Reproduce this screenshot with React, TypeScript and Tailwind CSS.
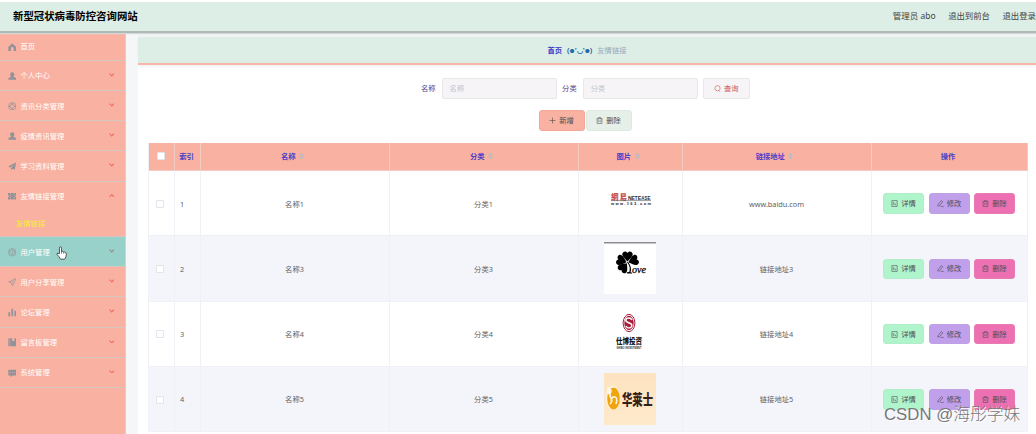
import type { ReactNode } from 'react'

type IconProps = { className?: string }

function Glyph({ className = '', children }: { className?: string; children: ReactNode }) {
  return (
    <svg viewBox="0 0 24 24" className={`shrink-0 ${className}`} fill="none" stroke="currentColor" strokeWidth="2">
      {children}
    </svg>
  )
}

const solid = { fill: 'currentColor', stroke: 'none' }

const glyphs: Record<string, ReactNode> = {
  home: <path {...solid} d="M12 1.500 1 11v11.500h7V15a4 4 0 0 1 8 0v7.500h7V11z" />,
  user: <path {...solid} d="M12 1a6 6 0 0 1 4 10.500V14l4 1.500q3 1 3 4V22H1v-2.500q0-3 3-4L8 14v-2.500A6 6 0 0 1 12 1z" />,
  help: (
    <>
      <circle cx="12" cy="12" r="10.500" />
      <circle cx="12" cy="12" r="5.500" />
      <path strokeWidth="3" d="M12 2v4M12 18v4M2 12h4M18 12h4" />
    </>
  ),
  promotion: <path {...solid} d="M23 1 1 12l5 3.500L17 7 9 17v6l4-4 6 3z" />,
  ticket: <path {...solid} d="M0 3h6v2h2V3h8v2h2V3h6v6a3 3 0 0 0 0 6v6h-6v-2h-2v2H8v-2H6v2H0v-6a3 3 0 0 0 0-6zM6 8v3h2V8zm0 6v3h2v-3zm10-6v3h2V8zm0 6v3h2v-3z" />,
  gauge: (
    <>
      <circle cx="12" cy="12" r="10.500" />
      <path d="M6 16a7 7 0 1 1 12 0M12 17l2-8M9 18h6" />
    </>
  ),
  position: <path d="M22 2 2 11l8 3 3 8z M10 14l5-5" />,
  bars: <path {...solid} d="M1 12h5v11H1zM9.500 2h5v21h-5zM18 8h5v15h-5z" />,
  notebook: <path {...solid} d="M1 1h4v22H1zM6 1h6v9l3-2.500 3 2.500V1h5v22H6z" />,
  chat: <path {...solid} d="M1 2h22v16H13l-5 5v-5H1zM6 9v2.500h2.500V9zm5 0v2.500h2.500V9zm5 0v2.500h2.500V9z" />,
}

const menu = [
  { icon: 'home', label: '首页' },
  { icon: 'user', label: '个人中心' },
  { icon: 'help', label: '资讯分类管理' },
  { icon: 'user', label: '疫情资讯管理' },
  { icon: 'promotion', label: '学习资料管理' },
  { icon: 'ticket', label: '友情链接管理', open: true },
  { icon: 'gauge', label: '用户管理', hover: true },
  { icon: 'position', label: '用户分享管理' },
  { icon: 'bars', label: '论坛管理' },
  { icon: 'notebook', label: '留言板管理' },
  { icon: 'chat', label: '系统管理' },
]

function Trash({ className }: IconProps) {
  return (
    <Glyph className={className}>
      <path d="M2 6h20M8 6V2h8v4M4 6v16h16V6M9.500 11v6M14.500 11v6" />
    </Glyph>
  )
}

function Detail({ className }: IconProps) {
  return (
    <Glyph className={className}>
      <path d="M3 2h18v20H3zM8 7v10M12 16h5M12 11l4 3" />
    </Glyph>
  )
}

function Edit({ className }: IconProps) {
  return (
    <Glyph className={className}>
      <path d="M15 2l5 4L9 19l-6 2 1-6zM12 22h11" />
    </Glyph>
  )
}

function Sort() {
  return (
    <svg viewBox="0 0 6 8" className="ml-[3.500px] h-[6.500px] w-[5px] shrink-0" fill="#b4bdc6">
      <path d="M3 0 6 3.500H0zM3 8 0 4.500h6z" />
    </svg>
  )
}

function Hand() {
  return (
    <svg viewBox="0 0 16 20" className="absolute top-[9px] left-[56px] h-[14px] w-[11px]">
      <path
        d="M5 11V3q0-2 1.500-2T8 3v5q2-1 3 .5 2-.5 2.500 1 1.800 0 1.500 2.500 0 4-2.500 7H6.500Q4.500 15 1.500 12q-.5-2 1.500-1.500z"
        fill="#fff"
        stroke="#333"
        strokeWidth="1.200"
      />
      <path d="M8 8v3M11 9v2" stroke="#333" strokeWidth=".8" />
    </svg>
  )
}

function Sidebar() {
  return (
    <aside className="w-[125.500px] shrink-0 border-r border-[#d9cfcf] bg-[#f9b1a1] text-white">
      {menu.map((item, i) => (
        <div key={item.label}>
          <div
            className={`relative flex items-center border-b pt-[1px] pl-[7.500px] ${i === 0 ? 'h-[28px]' : 'h-[30.150px]'} ${
              item.open ? 'border-transparent' : 'border-[#d8c5c0]'
            } ${item.hover ? 'bg-[#98d1c9]' : ''}`}
          >
            <Glyph className="h-[8.500px] w-[8.500px] text-[#909399]">{glyphs[item.icon]}</Glyph>
            <span className="ml-[4.500px]">{item.label}</span>
            {i > 0 && (
              <svg
                viewBox="0 0 10 6"
                className={`absolute top-[12px] right-[10.500px] h-[3.500px] w-[5.500px] ${item.hover ? 'text-[#a08a84]' : 'text-[#f4696b]'}`}
                fill="none"
                stroke="currentColor"
                strokeWidth="2"
              >
                <path d={item.open ? 'M1 5l4-4 4 4' : 'M1 1l4 4 4-4'} />
              </svg>
            )}
            {item.hover && <Hand />}
          </div>
          {item.open && (
            <div className="flex h-[25.500px] items-center border-b border-[#d8c5c0] pl-[16px] text-[#f5ee32]">友情链接</div>
          )}
        </div>
      ))}
    </aside>
  )
}

function NetEase() {
  return (
    <svg viewBox="0 0 52 52" className="h-[52px] w-[52px]">
      <text x="7" y="22.500" fontSize="7.500" fontWeight="900" fill="#c8504c" textLength="16" fontFamily="Noto Sans CJK TC">網易</text>
      <text x="24" y="22.500" fontSize="5.800" fontWeight="bold" fill="#1c2c3c" textLength="22.500" lengthAdjust="spacingAndGlyphs" fontFamily="Liberation Sans">
        N<tspan fontSize="4.900">ET</tspan>E<tspan fontSize="4.900">ASE</tspan>
      </text>
      <path d="M7 23.600h40" stroke="#555" strokeWidth=".6" />
      <text x="7" y="27.500" fontSize="4" fontWeight="bold" fill="#222" textLength="40" lengthAdjust="spacing" fontFamily="Liberation Sans">www.163.com</text>
    </svg>
  )
}

function Clover() {
  const heart = 'M0-1C-1.500-3-5-6-4.800-8.500-4.500-11.500-1-12 0-9.500 1-12 4.500-11.500 4.800-8.500 5-6 1.500-3 0-1z'
  return (
    <svg viewBox="0 0 52 52" className="h-[52px] w-[52px] bg-white">
      <path d="M0 .7h52" stroke="#8d8d8f" strokeWidth="1.500" />
      {[-142, -72, 0, 72].map((a) => (
        <path key={a} d={heart} transform={`translate(23.500 20.500) rotate(${a}) scale(1.080 1)`} />
      ))}
      <path d="M23.500 20q4 5 2.500 10l-3 1h5" fill="none" stroke="#000" strokeWidth="1.200" />
      <text x="28" y="30.800" fontSize="9.500" fontStyle="italic" textLength="14" lengthAdjust="spacingAndGlyphs" stroke="#000" strokeWidth=".25" fontFamily="Liberation Serif">ove</text>
    </svg>
  )
}

function Shibo() {
  return (
    <svg viewBox="0 0 52 52" className="h-[52px] w-[52px]">
      <ellipse cx="25" cy="15" rx="5.900" ry="8.600" fill="#fff" stroke="#a61e3b" strokeWidth="1" />
      <ellipse cx="25" cy="15" rx="4.700" ry="7.200" fill="#a61e3b" />
      <path d="M28 12q-1-2-3-2c-4 0-4 3.500-1 4.500l2 .8c3 1.200 2 4.700-1 4.700q-2 0-3-2" fill="none" stroke="#fff" strokeWidth="1.500" />
      <text x="12" y="35.500" fontSize="8.300" fontWeight="900" fill="#181818" textLength="26" lengthAdjust="spacingAndGlyphs" fontFamily="Noto Sans CJK SC">仕博投资</text>
      <text x="12.500" y="40.500" fontSize="2.800" fontWeight="bold" fill="#333" textLength="25" lengthAdjust="spacingAndGlyphs" fontFamily="Liberation Sans">SHIBO INVESTMENT</text>
    </svg>
  )
}

function Hualaishi() {
  return (
    <svg viewBox="0 0 52 52" className="h-[52px] w-[52px] overflow-visible bg-linear-to-b from-[#fde3c0] to-[#fee9cb]">
      <ellipse cx="9" cy="25" rx="7" ry="12" fill="#fff4e2" />
      <ellipse cx="9.500" cy="25.500" rx="6.300" ry="11" fill="#f1a50c" />
      <path d="M3 14.500q4.500-1 4.500 3.500T3 21z" fill="#fff4e2" />
      <path d="M7 17q-2 5 0 8t-1 6M7 28q1-5 4-4t1 7" fill="none" stroke="#fff4e2" strokeWidth="1.600" />
      <text x="18" y="31.500" fontSize="14.500" fontWeight="900" fill="#352017" textLength="31" lengthAdjust="spacingAndGlyphs" fontFamily="Noto Sans CJK SC">华莱士</text>
    </svg>
  )
}

const rows = [
  { id: 1, name: '名称1', type: '分类1', url: 'www.baidu.com', logo: <NetEase /> },
  { id: 2, name: '名称3', type: '分类3', url: '链接地址3', logo: <Clover /> },
  { id: 3, name: '名称4', type: '分类4', url: '链接地址4', logo: <Shibo /> },
  { id: 4, name: '名称5', type: '分类5', url: '链接地址5', logo: <Hualaishi /> },
]

const grid = 'grid grid-cols-[26px_26px_189px_189px_104px_189px_156px]'

function Cell({ children, className = '' }: { children: ReactNode; className?: string }) {
  return <div className={`flex items-center justify-center border-r border-b border-[#eff1f6] ${className}`}>{children}</div>
}

function Check() {
  return <span className="h-[8px] w-[8px] rounded-[1px] border border-[#e3e4e8] bg-white" />
}

const button = 'flex h-[20.500px] items-center justify-center rounded-[3px] border'

function Table() {
  return (
    <div className="mt-[12px] ml-[9.500px] w-[879.500px] border-l border-[#eff1f6]">
      <div className={`${grid} h-[28.500px] bg-[#f9b1a1] font-bold text-[#4a3fc8] *:border-[#f3cbc3]`}>
        <Cell className="pr-[1px]"><Check /></Cell>
        <Cell className="pr-[1px]">索引</Cell>
        {['名称', '分类', '图片', '链接地址'].map((title) => (
          <Cell key={title} className="pr-[4px]">{title}<Sort /></Cell>
        ))}
        <Cell className="pr-[2px]">操作</Cell>
      </div>
      {rows.map((row) => (
        <div key={row.id} className={`${grid} h-[65.300px] odd:bg-[#f4f5fa] even:bg-white`}>
          <Cell className="pt-[1px] pr-[3px]"><Check /></Cell>
          <div className="flex items-center border-r border-b border-[#eff1f6] pt-[2px] pl-[5.500px]">{row.id}</div>
          <Cell className="pt-[2px]">{row.name}</Cell>
          <Cell className="pt-[2px]">{row.type}</Cell>
          <Cell className="pr-[1px]">{row.logo}</Cell>
          <Cell className="pt-[2px]">{row.url}</Cell>
          <Cell className="gap-[4.500px] pt-[1px] text-[#4c4c55]">
            <button className={`${button} w-[41px] gap-[3px] border-[#b0edc9] bg-[#b0f4cb]`}><Detail className="h-[7px] w-[7px]" />详情</button>
            <button className={`${button} w-[41px] gap-[3px] border-[#bfa2e6] bg-[#c09feb]`}><Edit className="h-[7px] w-[7px]" />修改</button>
            <button className={`${button} w-[41px] gap-[3px] border-[#ea7bb2] bg-[#ed71b2]`}><Trash className="h-[7px] w-[7px]" />删除</button>
          </Cell>
        </div>
      ))}
    </div>
  )
}

const field = 'ml-[6px] flex h-[21px] w-[115px] items-center rounded-[2px] border border-[#e9e7ea] bg-[#f6f4f6] pl-[7px] text-[#c0c4cc]'

function SearchForm() {
  return (
    <div className="mt-[10.500px] flex items-center pl-[283px] text-[#4c4593]">
      名称
      <div className={`${field} mr-[5.500px]`}>名称</div>
      分类
      <div className={`${field} mr-[5px]`}>分类</div>
      <button className="flex h-[21px] w-[47px] items-center justify-center gap-[3px] rounded-[2px] border border-[#e9e7ea] bg-[#f6f4f6] text-[#cf5555]">
        <Glyph className="h-[7px] w-[7px]"><circle cx="12" cy="11" r="9" /><path d="M16 19l4 4" /></Glyph>
        查询
      </button>
    </div>
  )
}

export default function App() {
  return (
    <div className="relative flex h-[434px] w-[1036px] flex-col overflow-hidden bg-white pt-[2px] font-['Noto_Sans','Noto_Sans_CJK_SC',sans-serif] text-[7.300px] leading-none whitespace-nowrap text-[#606266]">
      <header className="z-10 flex h-[31px] shrink-0 items-center border-b-2 border-[#aeb9b4] bg-[#dceee5] pl-[13px] text-[8.400px] text-[#444] shadow-[0_1px_1px_#d5d8da]">
        <h1 className="text-[10.400px] font-bold text-black">新型冠状病毒防控咨询网站</h1>
        <span className="ml-auto text-[8.500px]">管理员 abo</span>
        <span className="ml-[12.500px]">退出到前台</span>
        <span className="ml-[12.500px]">退出登录</span>
      </header>
      <div className="flex min-h-0 flex-1">
        <Sidebar />
        <main className="min-w-0 flex-1 bg-[#f4f6f8] pl-[12.500px]">
          <div className="h-full bg-white">
            <div className="h-[4px] bg-[#f1f3f5]" />
            <div className="flex h-[27.500px] items-center justify-center border-b-2 border-[#f9b5a6] bg-[#dceee5] pt-[1px] shadow-[0_2px_3px_#f1f2f6]">
              <b className="text-[#3a36cc]">首页</b>
              <b className="mx-[5px] flex items-center gap-[.3px] text-[#2469a9]">
                (<span className="text-[4.600px]">●</span>'◡'<span className="text-[4.600px]">●</span>)
              </b>
              <span className="text-[#97a8be]">友情链接</span>
            </div>
            <div className="h-[3px]" />
            <SearchForm />
            <div className="mt-[11px] flex pl-[400.500px] text-[#4c4c4c]">
              <button className={`${button} w-[46px] gap-[3px] border-[#f3a998] bg-[#f9b1a1]`}>
                <Glyph className="h-[7px] w-[7px]"><path d="M12 2v20M2 12h20" /></Glyph>
                新增
              </button>
              <button className={`${button} ml-[1px] w-[46px] gap-[3px] border-[#dfe8e3] bg-[#e7efe9]`}>
                <Trash className="h-[7px] w-[7px]" />
                删除
              </button>
            </div>
            <Table />
          </div>
        </main>
      </div>
      <div className="absolute top-[407px] left-[884px] z-10 font-['Liberation_Sans','Noto_Sans_CJK_SC',sans-serif] text-[16.800px] font-light text-[#777] [text-shadow:1px_1px_0_#fff]">
        CSDN @海彤学妹
      </div>
    </div>
  )
}
